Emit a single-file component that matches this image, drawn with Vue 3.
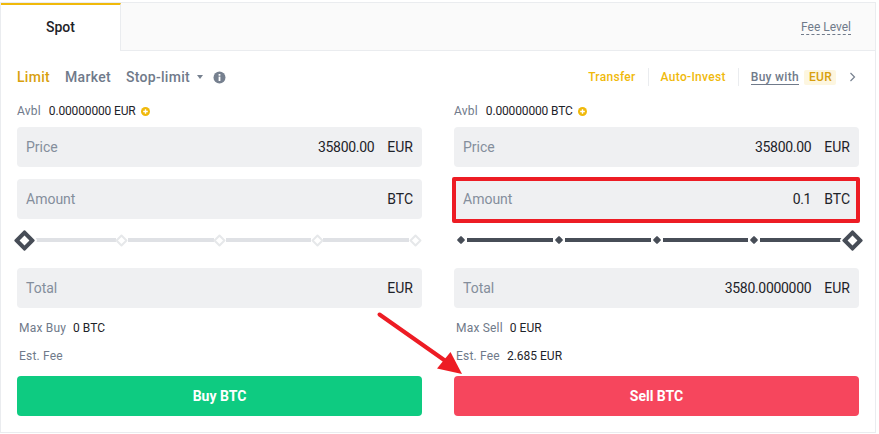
<template>
  <div class="panel">
    <div class="tabs">
      <div class="tab">Spot</div>
      <a class="fee">Fee Level</a>
    </div>

    <div class="order-row">
      <div class="types">
        <span class="type active">Limit</span>
        <span class="type">Market</span>
        <span class="type">Stop-limit</span>
        <span class="caret"></span>
        <svg class="info" width="13" height="13" viewBox="0 0 13 13">
          <circle cx="6.5" cy="6.5" r="6" fill="#76808f" />
          <rect x="5.6" y="5.6" width="1.8" height="4.4" fill="#fff" />
          <rect x="5.6" y="3" width="1.8" height="1.7" fill="#fff" />
        </svg>
      </div>
      <div class="links">
        <span class="link">Transfer</span>
        <span class="sep"></span>
        <span class="link">Auto-Invest</span>
        <span class="sep"></span>
        <span class="buy-with">Buy with</span>
        <span class="cur">EUR</span>
        <svg class="chev" width="7" height="10" viewBox="0 0 7 10">
          <path d="M1.5 1 L5.5 5 L1.5 9" fill="none" stroke="#76808f" stroke-width="1.2" />
        </svg>
      </div>
    </div>

    <div class="cols">
      <div v-for="col in cols" :key="col.side" class="col">
        <div class="avbl">
          <span class="muted">Avbl</span>
          <span class="val">{{ col.avbl }}</span>
          <svg class="plus" width="9" height="9" viewBox="0 0 9 9">
            <circle cx="4.5" cy="4.5" r="4.5" fill="#f0b90b" />
            <path d="M4.5 2.2 V6.8 M2.2 4.5 H6.8" stroke="#fff" stroke-width="1.4" />
          </svg>
        </div>

        <div class="field">
          <span class="label">Price</span>
          <span class="num">35800.00</span>
          <span class="unit">EUR</span>
        </div>
        <div class="field second">
          <span class="label">Amount</span>
          <span class="num">{{ col.amount }}</span>
          <span class="unit">BTC</span>
        </div>

        <div class="slider" :class="{ full: col.full }">
          <template v-for="(n, i) in 5" :key="n">
            <span v-if="i > 0" class="seg"></span>
            <span class="dot" :class="{ big: col.full ? i === 4 : i === 0 }"></span>
          </template>
        </div>

        <div class="field">
          <span class="label">Total</span>
          <span class="num">{{ col.total }}</span>
          <span class="unit">EUR</span>
        </div>

        <div class="meta">
          <span class="muted">{{ col.maxLabel }}</span>
          <span class="val">{{ col.max }}</span>
        </div>
        <div class="meta">
          <span class="muted">Est. Fee</span>
          <span class="val">{{ col.fee }}</span>
        </div>

        <button class="action" :class="col.side">{{ col.action }}</button>
      </div>
    </div>

    <!-- annotations drawn over the screenshot -->
    <div class="red-box"></div>
    <svg class="arrow" width="879" height="434" viewBox="0 0 879 434">
      <path d="M379.5 314.5 L447 362" stroke="#ed1c24" stroke-width="4" stroke-linecap="round" />
      <polygon points="462,374 437,368.5 450.5,352" fill="#ed1c24" />
    </svg>
  </div>
</template>

<script setup>
const cols = [
  {
    side: 'buy',
    avbl: '0.00000000 EUR',
    amount: '',
    total: '',
    maxLabel: 'Max Buy',
    max: '0 BTC',
    fee: '',
    action: 'Buy BTC',
    full: false
  },
  {
    side: 'sell',
    avbl: '0.00000000 BTC',
    amount: '0.1',
    total: '3580.0000000',
    maxLabel: 'Max Sell',
    max: '0 EUR',
    fee: '2.685 EUR',
    action: 'Sell BTC',
    full: true
  }
]
</script>

<style>
html, body {
  margin: 0;
  background: #fff;
}
</style>

<style scoped>
.panel {
  position: relative;
  box-sizing: border-box;
  width: 876px;
  height: 431px;
  margin-top: 2px;
  border: 1px solid #eaecef;
  font-family: Roboto, "Noto Sans", sans-serif;
  color: #1e2329;
}

.tabs {
  display: flex;
  align-items: center;
  justify-content: space-between;
  height: 48px;
  box-sizing: border-box;
  background: #fafafa;
  border-bottom: 1px solid #eaecef;
}

.tab {
  box-sizing: border-box;
  width: 120px;
  height: 48px;
  line-height: 44px;
  text-align: center;
  font-size: 14px;
  font-weight: 500;
  background: #fff;
  border-top: 2px solid #f0b90b;
  border-right: 1px solid #eaecef;
}

.fee {
  margin-top: 2px;
  margin-right: 24px;
  font-size: 12px;
  color: #707a8a;
  border-bottom: 1px dashed #707a8a;
  line-height: 14px;
}

.order-row {
  display: flex;
  align-items: center;
  justify-content: space-between;
  height: 20px;
  margin-top: 16px;
  padding: 0 19px 0 16px;
}

.types {
  display: flex;
  align-items: center;
  letter-spacing: 0.3px;
}

.type {
  margin-right: 15px;
  font-size: 14px;
  font-weight: 500;
  color: #707a8a;
}

.type.active {
  color: #d89f0e;
}

.type:nth-child(3) {
  margin-right: 7px;
}

.caret {
  width: 0;
  height: 0;
  margin-right: 10px;
  border: 3.5px solid transparent;
  border-top: 4px solid #76808f;
  border-bottom: 0;
}

.links {
  display: flex;
  align-items: center;
  font-size: 12px;
  font-weight: 500;
  letter-spacing: 0.3px;
}

.link {
  color: #f0b90b;
}

.sep {
  width: 1px;
  height: 18px;
  margin: 0 12px;
  background: #eaecef;
}

.buy-with {
  color: #707a8a;
  border-bottom: 1px solid #707a8a;
  line-height: 14px;
}

.cur {
  margin-left: 5px;
  padding: 0 4px 0 5px;
  background: #fdf6e0;
  color: #d89f0e;
  line-height: 15px;
  border-radius: 2px;
}

.chev {
  margin-left: 13px;
}

.cols {
  display: flex;
  gap: 32px;
  margin-top: 16px;
  padding-left: 16px;
}

.col {
  width: 405px;
}

.avbl {
  display: flex;
  align-items: center;
  height: 16px;
  margin-bottom: 8px;
  font-size: 12px;
}

.avbl .val {
  margin-left: 8px;
  letter-spacing: -0.15px;
}

.muted {
  color: #707a8a;
  letter-spacing: 0.2px;
}

.val {
  margin-left: 7px;
  color: #1e2329;
}

.plus {
  margin-left: 5px;
}

.field {
  display: flex;
  align-items: center;
  box-sizing: border-box;
  height: 40px;
  padding: 0 9px;
  background: #eff0f2;
  border-radius: 4px;
  font-size: 14px;
}

.field.second {
  margin-top: 12px;
}

.label {
  flex: 1;
  color: #848e9c;
}

.num {
  margin-right: 13px;
  letter-spacing: -0.3px;
}

.slider {
  display: flex;
  align-items: center;
  height: 22px;
  margin: 10px 1px 17px;
}

.seg {
  flex: 1;
  height: 4px;
  background: #dfe1e5;
}

.slider.full .seg {
  background: #474d57;
}

/* every stop takes a 12px slot so the stops stay evenly spaced */
.dot {
  box-sizing: border-box;
  flex: none;
  width: 9px;
  height: 9px;
  margin: 0 1.5px;
  background: #fff;
  border: 2px solid #e6e8ea;
  border-radius: 1px;
  transform: rotate(45deg);
}

.slider .dot.big {
  width: 15px;
  height: 15px;
  margin: 0 -1.5px;
  background: #fff;
  border: 4px solid #474d57;
  box-shadow: 0 0 0 2px #fff;
}

.slider.full .dot:not(.big) {
  width: 6px;
  height: 6px;
  margin: 0 3px;
  background: #474d57;
  border-color: #474d57;
}

.meta {
  display: flex;
  align-items: center;
  height: 16px;
  margin-top: 12px;
  padding-left: 2px;
  font-size: 12px;
}

.action {
  display: block;
  width: 100%;
  height: 40px;
  margin-top: 12px;
  border: 0;
  border-radius: 4px;
  color: #fff;
  font: inherit;
  font-size: 14px;
  font-weight: 700;
}

.action.buy {
  background: #0ecb81;
}

.action.sell {
  background: #f6465d;
}

.red-box {
  position: absolute;
  left: 451px;
  top: 174px;
  width: 408px;
  height: 46px;
  box-sizing: border-box;
  border: 4px solid #ed1c24;
  border-radius: 2px;
}

.arrow {
  position: absolute;
  left: -1px;
  top: -3px;
  pointer-events: none;
}
</style>
